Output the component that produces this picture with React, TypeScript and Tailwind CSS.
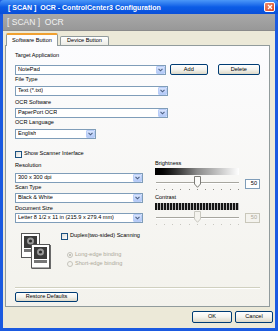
import type { ReactNode } from 'react';

const font = "font-['Liberation_Sans',Arial,sans-serif]";

function Arrow() {
  return (
    <div className="ml-auto flex h-full w-[9px] items-center justify-center rounded-[1px] border border-[#b9cdf8] bg-gradient-to-b from-[#d8e4fd] to-[#b3c9f7]">
      <svg width="5" height="4" viewBox="0 0 5 4">
        <path d="M0.5 0.8 L2.5 2.8 L4.5 0.8" fill="none" stroke="#4d6185" strokeWidth="1.1" />
      </svg>
    </div>
  );
}

function Select({ value, className }: { value: string; className: string }) {
  return (
    <div className={`flex h-[10px] items-center border border-[#7f9db9] bg-white pl-[2px] ${className}`}>
      <span className="truncate text-[5.6px] leading-none text-black">{value}</span>
      <Arrow />
    </div>
  );
}

function Label({ children, className = '' }: { children: ReactNode; className?: string }) {
  return <div className={`flex h-[8px] items-center text-[5.6px] leading-none text-black ${className}`}>{children}</div>;
}

function Button({ children, className }: { children: ReactNode; className: string }) {
  return (
    <div
      className={`flex items-center justify-center rounded-[2px] border border-[#003c74] bg-gradient-to-b from-white via-[#f4f3ee] to-[#dcd8c8] text-[5.6px] leading-none text-black ${className}`}
    >
      {children}
    </div>
  );
}

function Checkbox() {
  return <div className="h-[7px] w-[7px] shrink-0 border border-[#1c5180] bg-gradient-to-br from-[#dcdcd7] to-white" />;
}

function Radio({ checked }: { checked?: boolean }) {
  return (
    <div className="flex h-[6px] w-[6px] shrink-0 items-center justify-center rounded-full border border-[#c4c3bb] bg-[#f4f3ee]">
      {checked && <div className="h-[2px] w-[2px] rounded-full bg-[#b4b3ab]" />}
    </div>
  );
}

function Slider({ disabled }: { disabled?: boolean }) {
  const ticks = Array.from({ length: 11 }, (_, i) => i);
  return (
    <div className="relative h-[15px] w-[85px]">
      <div className="absolute left-[1px] right-[1px] top-[6px] h-[2px] border-t border-[#a7a69f] bg-white" />
      <div className="absolute left-[39px] top-0">
        <svg width="7" height="12" viewBox="0 0 7 12">
          <path
            d="M0.5 0.5 H6.5 V8 L3.5 11.3 L0.5 8 Z"
            fill={disabled ? '#f4f3ee' : '#fbfbf9'}
            stroke={disabled ? '#c9c8c0' : '#7c7b76'}
          />
        </svg>
      </div>
      <div className="absolute left-[1px] right-[1px] top-[13px] flex justify-between">
        {ticks.map(t => (
          <div key={t} className={`h-px w-px ${disabled ? 'bg-[#c8c7c0]' : 'bg-[#8f8e88]'}`} />
        ))}
      </div>
    </div>
  );
}

function DuplexIcon() {
  return (
    <svg width="30" height="36" viewBox="0 0 30 36">
      <rect x="1" y="1" width="18" height="24" fill="#c8c8c8" />
      <rect x="0.5" y="0.5" width="18" height="24" fill="#fff" stroke="#555" />
      <rect x="3" y="3" width="13" height="12" fill="#3a3a3a" />
      <circle cx="9.5" cy="8" r="3.5" fill="#9a9a9a" />
      <circle cx="9.5" cy="8" r="1.6" fill="#2a2a2a" />
      <rect x="3" y="16" width="13" height="3" fill="#777" />
      <rect x="11" y="12" width="19" height="24" fill="#6a6a6a" />
      <rect x="10.5" y="11.5" width="18" height="23.5" fill="#fff" stroke="#555" />
      <rect x="13" y="14" width="13" height="12" fill="#3a3a3a" />
      <circle cx="19.5" cy="19" r="3.5" fill="#9a9a9a" />
      <circle cx="19.5" cy="19" r="1.6" fill="#2a2a2a" />
      <rect x="13" y="27" width="13" height="3" fill="#777" />
    </svg>
  );
}

export default function App() {
  return (
    <div className={`flex h-[331px] w-[278px] flex-col bg-[#1b5ae0] ${font}`}>
      <div className="flex h-[14px] shrink-0 items-center rounded-t-[4px] bg-gradient-to-b from-[#4b97f8] via-[#0b5ce6] to-[#0a4fd9] pl-[8px] pr-[3px]">
        <span className="whitespace-pre text-[7px] font-bold leading-none text-white">
          [ SCAN ]  OCR - ControlCenter3 Configuration
        </span>
        <div className="ml-auto flex h-[10px] w-[11px] items-center justify-center rounded-[2px] border border-white bg-gradient-to-br from-[#f08a6a] to-[#d8431c]">
          <svg width="6" height="6" viewBox="0 0 6 6">
            <path d="M1 1 L5 5 M5 1 L1 5" stroke="#fff" strokeWidth="1.3" />
          </svg>
        </div>
      </div>

      <div className="mx-[3px] mb-[3px] flex flex-1 flex-col bg-[#ece9d8]">
        <div className="flex h-[17px] items-center border-b border-[#8a8a8a] bg-gradient-to-b from-[#a8a8a8] to-[#989898] pl-[4px]">
          <span className="whitespace-pre text-[8.5px] leading-none text-[#f2f2f2]">[ SCAN ]  OCR</span>
        </div>

        <div className="relative z-10 mt-[2px] -mb-px flex h-[13px] items-end pl-[3px]">
          <div className="flex h-[13px] w-[52px] items-center justify-center rounded-t-[2px] border-x border-t-2 border-[#919b9c] border-t-[#f0a030] bg-[#fcfcfe] text-[5.6px] leading-none text-black">
            Software Button
          </div>
          <div className="mb-px ml-[2px] flex h-[9px] w-[49px] items-center justify-center rounded-t-[2px] border-x border-t border-[#919b9c] bg-gradient-to-b from-white to-[#ecebe5] text-[5.6px] leading-none text-black">
            Device Button
          </div>
        </div>

        <div className="ml-[2px] mr-[5px] flex h-[262px] flex-col border border-[#919b9c] bg-gradient-to-b from-[#fcfcfe] to-[#f3f2ec] px-[9px]">
          <Label className="mt-[6px]">Target Application</Label>
          <div className="mt-[4px] flex items-center">
            <Select value="NotePad" className="w-[153px]" />
            <Button className="ml-[4px] h-[11px] w-[38px]">Add</Button>
            <Button className="ml-[10px] h-[11px] w-[43px]">Delete</Button>
          </div>
          <Label className="mt-[1px]">File Type</Label>
          <Select value="Text (*.txt)" className="mt-[2px] w-[153px]" />
          <Label className="mt-[3px]">OCR Software</Label>
          <Select value="PaperPort OCR" className="mt-[1px] w-[153px]" />
          <Label className="mt-[1px]">OCR Language</Label>
          <Select value="English" className="mt-[2px] w-[81px]" />

          <div className="mt-[11px] flex">
            <div className="flex w-[129px] flex-col">
              <div className="flex h-[8px] items-center gap-[2px]">
                <Checkbox />
                <span className="text-[5.6px] leading-none text-black">Show Scanner Interface</span>
              </div>
              <Label className="mt-[4px]">Resolution</Label>
              <Select value="300 x 300 dpi" className="mt-[3px] w-full" />
              <Label className="mt-[1px]">Scan Type</Label>
              <Select value="Black & White" className="mt-[1px] w-full" />
              <Label className="mt-[2px]">Document Size</Label>
              <Select value="Letter 8 1/2 x 11 in (215.9 x 279.4 mm)" className="w-full" />
            </div>

            <div className="ml-[12px] flex w-[106px] flex-col">
              <Label className="mt-[10px]">Brightness</Label>
              <div className="h-[7px] w-[84px] bg-gradient-to-r from-black via-[#8a8a8a] to-white" />
              <div className="mt-[1px] flex">
                <Slider />
                <div className="ml-auto mt-[3px] flex h-[10px] w-[15px] items-center justify-end border border-[#7f9db9] bg-white pr-[2px] text-[5.6px] leading-none text-black">
                  50
                </div>
              </div>
              <Label className="mt-[3px] text-[#aca899]">Contrast</Label>
              <div className="mt-[1px] h-[7px] w-[84px] bg-[repeating-linear-gradient(90deg,#151515_0px,#151515_2px,#b5b5b5_2px,#b5b5b5_3px)]" />
              <div className="mt-[1px] flex">
                <Slider disabled />
                <div className="ml-auto mt-[2px] flex h-[10px] w-[15px] items-center justify-end border border-[#c9c7ba] bg-[#f4f3ee] pr-[2px] text-[5.6px] leading-none text-[#aca899]">
                  50
                </div>
              </div>
            </div>
          </div>

          <div className="mt-[7px] flex">
            <div className="ml-[6px]">
              <DuplexIcon />
            </div>
            <div className="ml-[10px] flex flex-col">
              <div className="-mt-px flex h-[8px] items-center gap-[2px]">
                <Checkbox />
                <span className="text-[5.6px] leading-none text-black">Duplex(two-sided) Scanning</span>
              </div>
              <div className="ml-[6px] mt-[10px] flex h-[9px] items-center gap-[2px]">
                <Radio checked />
                <span className="text-[5.6px] leading-none text-[#aca899]">Long-edge binding</span>
              </div>
              <div className="ml-[6px] flex h-[9px] items-center gap-[2px]">
                <Radio />
                <span className="text-[5.6px] leading-none text-[#aca899]">Short-edge binding</span>
              </div>
            </div>
          </div>

          <div className="mt-[18px] h-[2px] border-t border-[#d0d0bf] bg-white" />
          <Button className="mt-[3px] h-[10px] w-[63px]">Restore Defaults</Button>
        </div>

        <div className="mt-[4px] flex justify-end gap-[3px] pr-[2px]">
          <Button className="h-[12px] w-[40px]">OK</Button>
          <Button className="h-[12px] w-[38px]">Cancel</Button>
        </div>
      </div>
    </div>
  );
}
